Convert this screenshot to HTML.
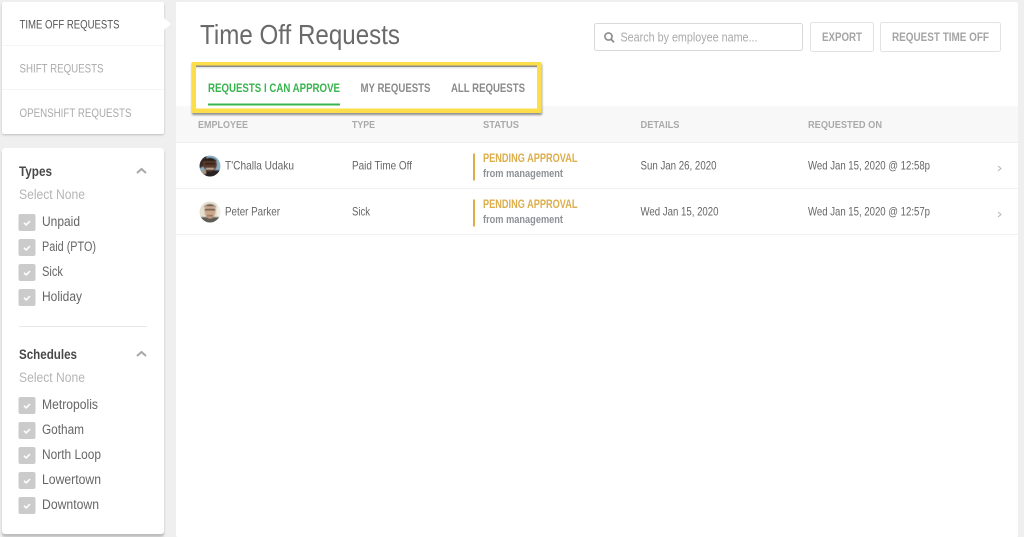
<!DOCTYPE html>
<html lang="en"><head><meta charset="utf-8"><title>Time Off Requests</title>
<style>
html,body{margin:0;padding:0;width:1024px;height:537px;overflow:hidden;background:#efefef}
svg{display:block}
text{font-family:"Liberation Sans",sans-serif}
</style></head><body>
<svg width="1024" height="537" viewBox="0 0 1024 537" xmlns="http://www.w3.org/2000/svg">
<defs>
<filter id="b" x="-5%" y="-5%" width="110%" height="110%"><feGaussianBlur stdDeviation="0.35"/></filter>
<filter id="s" x="-10%" y="-10%" width="120%" height="120%"><feGaussianBlur stdDeviation="1"/></filter>
<filter id="f" x="-10%" y="-10%" width="120%" height="120%"><feGaussianBlur stdDeviation="0.6"/></filter>
<clipPath id="a1"><circle cx="210" cy="166" r="10.500"/></clipPath>
<clipPath id="a2"><circle cx="210" cy="212" r="10.500"/></clipPath>
<g id="cb"><rect width="17" height="17" rx="2" fill="#cbcbcb"/><path d="M5.500 8.800l2.200 2.100L11.500 7" fill="none" stroke="#fff" stroke-width="1.600"/></g>
</defs>
<rect width="1024" height="537" fill="#efefef"/>

<!-- sidebar nav -->
<rect x="2" y="4" width="162" height="131" rx="2" fill="#bdbdbd" filter="url(#s)"/>
<rect x="2" y="2" width="162" height="132" rx="2" fill="#fff"/>
<path d="M164 18l7 6-7 6z" fill="#fff"/>
<rect x="2" y="45" width="162" height="1" fill="#f5f5f5"/>
<rect x="2" y="89" width="162" height="1" fill="#f5f5f5"/>
<g font-size="12" filter="url(#b)">
<text x="19.500" y="28.500" fill="#555" textLength="100" lengthAdjust="spacingAndGlyphs">TIME OFF REQUESTS</text>
<text x="19.500" y="72.500" fill="#aaa" textLength="84" lengthAdjust="spacingAndGlyphs">SHIFT REQUESTS</text>
<text x="19.500" y="117" fill="#aaa" textLength="112" lengthAdjust="spacingAndGlyphs">OPENSHIFT REQUESTS</text>
</g>

<!-- sidebar filters -->
<rect x="2" y="150" width="162" height="387" rx="3" fill="#bdbdbd" filter="url(#s)"/>
<rect x="2" y="148" width="162" height="386" rx="3" fill="#fff"/>
<rect x="19" y="326" width="128" height="1" fill="#e6e9e9"/>
<g filter="url(#b)">
<text x="19" y="176" font-size="14" font-weight="700" fill="#4a4a4a" textLength="33" lengthAdjust="spacingAndGlyphs">Types</text>
<text x="19" y="199" font-size="13.500" fill="#b5b5b5" textLength="66" lengthAdjust="spacingAndGlyphs">Select None</text>
<text x="42" y="226" font-size="13.500" fill="#666" textLength="38" lengthAdjust="spacingAndGlyphs">Unpaid</text>
<text x="42" y="251" font-size="13.500" fill="#666" textLength="54" lengthAdjust="spacingAndGlyphs">Paid (PTO)</text>
<text x="42" y="276" font-size="13.500" fill="#666" textLength="21" lengthAdjust="spacingAndGlyphs">Sick</text>
<text x="42" y="301" font-size="13.500" fill="#666" textLength="40" lengthAdjust="spacingAndGlyphs">Holiday</text>
<text x="19" y="359" font-size="14" font-weight="700" fill="#4a4a4a" textLength="58" lengthAdjust="spacingAndGlyphs">Schedules</text>
<text x="19" y="382" font-size="13.500" fill="#b5b5b5" textLength="66" lengthAdjust="spacingAndGlyphs">Select None</text>
<text x="42" y="409" font-size="13.500" fill="#666" textLength="56" lengthAdjust="spacingAndGlyphs">Metropolis</text>
<text x="42" y="434" font-size="13.500" fill="#666" textLength="42" lengthAdjust="spacingAndGlyphs">Gotham</text>
<text x="42" y="459" font-size="13.500" fill="#666" textLength="59" lengthAdjust="spacingAndGlyphs">North Loop</text>
<text x="42" y="484" font-size="13.500" fill="#666" textLength="59" lengthAdjust="spacingAndGlyphs">Lowertown</text>
<text x="42" y="509" font-size="13.500" fill="#666" textLength="57" lengthAdjust="spacingAndGlyphs">Downtown</text>
</g>
<path d="M137 173l4.500-4 4.500 4M137 356l4.500-4 4.500 4" fill="none" stroke="#a8a8a8" stroke-width="2"/>
<use href="#cb" x="18.500" y="214"/><use href="#cb" x="18.500" y="239"/><use href="#cb" x="18.500" y="264"/><use href="#cb" x="18.500" y="289"/>
<use href="#cb" x="18.500" y="397"/><use href="#cb" x="18.500" y="422"/><use href="#cb" x="18.500" y="447"/><use href="#cb" x="18.500" y="472"/><use href="#cb" x="18.500" y="497"/>

<!-- main -->
<rect x="176" y="2" width="842" height="535" rx="2" fill="#fff"/>
<rect x="176" y="106" width="842" height="37" fill="#f8f8f8"/>
<rect x="176" y="142" width="842" height="1" fill="#eeeeee"/>
<rect x="176" y="188" width="842" height="1" fill="#f1f1f1"/>
<rect x="176" y="234" width="842" height="1" fill="#f1f1f1"/>
<text x="200" y="44" font-size="28" fill="#6a6a6a" textLength="200" lengthAdjust="spacingAndGlyphs" filter="url(#b)">Time Off Requests</text>

<!-- header controls -->
<rect x="594.500" y="23.500" width="208" height="27" rx="2" fill="#fff" stroke="#d9d9d9"/>
<circle cx="608.500" cy="36.500" r="3.600" fill="none" stroke="#8b8b8b" stroke-width="1.600"/>
<path d="M611 39.200l3 3" stroke="#8b8b8b" stroke-width="1.800"/>
<rect x="810.500" y="22.500" width="63" height="29" rx="2" fill="#fff" stroke="#e2e2e2"/>
<rect x="880.500" y="22.500" width="120" height="29" rx="2" fill="#fff" stroke="#e2e2e2"/>
<g filter="url(#b)">
<text x="620.500" y="41.500" font-size="13" fill="#aaa" textLength="137" lengthAdjust="spacingAndGlyphs">Search by employee name...</text>
<text x="822" y="41" font-size="11.500" font-weight="700" fill="#a5a5a5" textLength="40" lengthAdjust="spacingAndGlyphs">EXPORT</text>
<text x="892" y="41" font-size="11.500" font-weight="700" fill="#a5a5a5" textLength="97" lengthAdjust="spacingAndGlyphs">REQUEST TIME OFF</text>
</g>

<!-- tabs highlight -->
<rect x="192" y="64" width="350" height="51" rx="1" fill="#444" opacity=".6" filter="url(#s)"/>
<rect x="191.500" y="62" width="350" height="51" rx="1" fill="#fbde4a"/>
<rect x="196" y="65.500" width="341" height="43" fill="#fff"/>
<rect x="196" y="65.500" width="341" height="1.500" fill="#8a8a8a"/>
<rect x="196" y="67" width="341" height="1.500" fill="#e8e8e8"/>
<g font-size="12" font-weight="700" filter="url(#b)">
<text x="208" y="92" fill="#38b44e" textLength="132" lengthAdjust="spacingAndGlyphs">REQUESTS I CAN APPROVE</text>
<text x="360.500" y="92" fill="#8a8a8a" textLength="70" lengthAdjust="spacingAndGlyphs">MY REQUESTS</text>
<text x="451" y="92" fill="#8a8a8a" textLength="74" lengthAdjust="spacingAndGlyphs">ALL REQUESTS</text>
</g>
<rect x="208" y="103.500" width="132" height="2" fill="#38b44e"/>

<!-- table header -->
<g font-size="10.500" font-weight="700" fill="#aaa" filter="url(#b)">
<text x="198" y="128" textLength="50" lengthAdjust="spacingAndGlyphs">EMPLOYEE</text>
<text x="352" y="128" textLength="23" lengthAdjust="spacingAndGlyphs">TYPE</text>
<text x="483" y="128" textLength="36" lengthAdjust="spacingAndGlyphs">STATUS</text>
<text x="640.500" y="128" textLength="39" lengthAdjust="spacingAndGlyphs">DETAILS</text>
<text x="808" y="128" textLength="74" lengthAdjust="spacingAndGlyphs">REQUESTED ON</text>
</g>

<!-- avatars -->
<g clip-path="url(#a1)"><g filter="url(#f)">
<rect x="199" y="155" width="22" height="22" fill="#8fb4c9"/>
<path d="M199 156h8l-3 10-5 3z" fill="#3a2c26"/>
<rect x="199" y="170" width="22" height="8" fill="#2b2320"/>
<ellipse cx="210" cy="164.500" rx="7" ry="7" fill="#5a3a2a"/>
<path d="M203 161c1-4 12-4 14 0z" fill="#241c18"/>
<rect x="205" y="163" width="10" height="1.300" fill="#1f1714"/>
<rect x="206" y="168" width="8" height="1.500" fill="#c9b5a5"/>
<rect x="200" y="170" width="6" height="4" fill="#a89584"/>
</g></g>
<g clip-path="url(#a2)"><g filter="url(#f)">
<rect x="199" y="201" width="22" height="22" fill="#e6dfd0"/>
<rect x="199" y="217" width="22" height="7" fill="#5f5c52"/>
<ellipse cx="210" cy="211.500" rx="5.500" ry="7" fill="#cba68a"/>
<path d="M204 208c0-5 12-5 12 0l-2-2h-8z" fill="#3f3128"/>
<rect x="204.500" y="209" width="11" height="1.300" fill="#3b312c"/>
<rect x="207" y="215" width="6" height="1.500" fill="#8b6a55"/>
<rect x="217" y="203" width="4" height="14" fill="#f3efe6"/>
</g></g>

<!-- rows -->
<g font-size="12" fill="#666" filter="url(#b)">
<text x="225" y="169.500" textLength="69" lengthAdjust="spacingAndGlyphs">T'Challa Udaku</text>
<text x="352" y="169.500" textLength="60" lengthAdjust="spacingAndGlyphs">Paid Time Off</text>
<text x="640.500" y="169.500" textLength="76" lengthAdjust="spacingAndGlyphs">Sun Jan 26, 2020</text>
<text x="808" y="169.500" textLength="122" lengthAdjust="spacingAndGlyphs">Wed Jan 15, 2020 @ 12:58p</text>
<text x="225" y="215.500" textLength="55" lengthAdjust="spacingAndGlyphs">Peter Parker</text>
<text x="352" y="215.500" textLength="18" lengthAdjust="spacingAndGlyphs">Sick</text>
<text x="640.500" y="215.500" textLength="78" lengthAdjust="spacingAndGlyphs">Wed Jan 15, 2020</text>
<text x="808" y="215.500" textLength="122" lengthAdjust="spacingAndGlyphs">Wed Jan 15, 2020 @ 12:57p</text>
</g>
<rect x="473" y="153.500" width="2" height="27" fill="#dcae4b"/>
<rect x="473" y="199.500" width="2" height="27" fill="#dcae4b"/>
<g filter="url(#b)">
<text x="483" y="162" font-size="11.500" font-weight="700" fill="#dcae4b" textLength="94.500" lengthAdjust="spacingAndGlyphs">PENDING APPROVAL</text>
<text x="483" y="177" font-size="11" font-weight="700" fill="#8d9196" textLength="80" lengthAdjust="spacingAndGlyphs">from management</text>
<text x="483" y="208" font-size="11.500" font-weight="700" fill="#dcae4b" textLength="94.500" lengthAdjust="spacingAndGlyphs">PENDING APPROVAL</text>
<text x="483" y="223" font-size="11" font-weight="700" fill="#8d9196" textLength="80" lengthAdjust="spacingAndGlyphs">from management</text>
</g>
<path d="M998 166l3 2.500-3 2.500M998 212l3 2.500-3 2.500" fill="none" stroke="#b5b5b5" stroke-width="1"/>
</svg>
</body></html>
